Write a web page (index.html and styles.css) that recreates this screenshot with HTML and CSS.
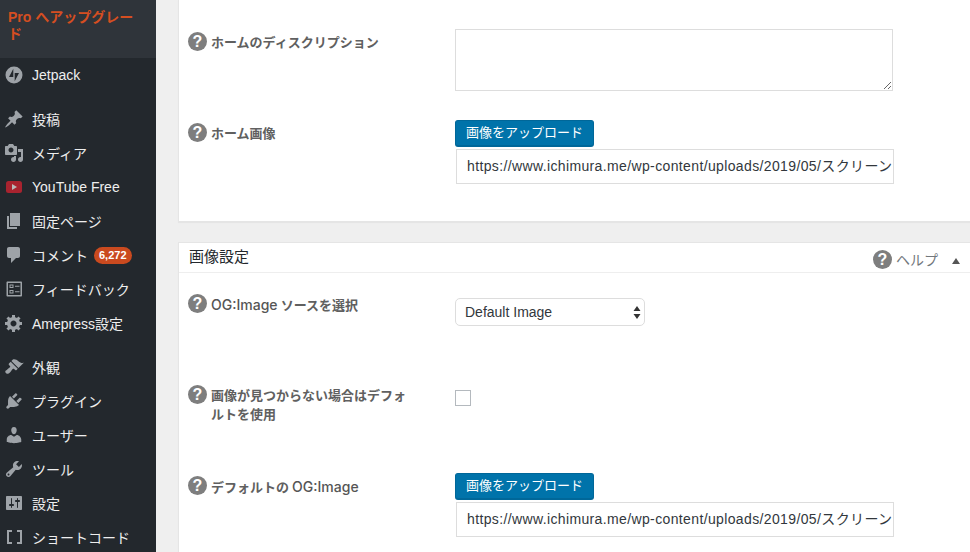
FILE: index.html
```html
<!DOCTYPE html>
<html lang="ja">
<head>
<meta charset="utf-8">
<title>設定</title>
<link rel="stylesheet" href="styles.css">
</head>
<body>
<div class="page">
  <nav class="side">
    <a class="upgrade">Pro へアップグレード</a>
    <a class="item sep"><svg class="ic" viewBox="0 0 20 20"><path fill-rule="evenodd" d="M10 1.500a8.500 8.500 0 1 0 0 17 8.500 8.500 0 0 0 0-17zM9.300 3.800v8.100H5zM10.700 16.200V8.100H15z"/></svg>Jetpack</a>
    <a class="item"><svg class="ic" viewBox="0 0 20 20"><path d="M10.44 3.02l1.82-1.82 6.36 6.35-1.83 1.82c-1.05-.68-2.48-.57-3.41.36l-.75.75c-.92.93-1.04 2.35-.35 3.41l-1.83 1.82-2.41-2.41-2.8 2.79c-.42.42-3.38 2.71-3.8 2.29s1.86-3.39 2.28-3.81l2.79-2.79L4.1 9.36l1.83-1.82c1.05.69 2.48.57 3.4-.36l.75-.75c.93-.92 1.05-2.35.36-3.41z"/></svg>投稿</a>
    <a class="item"><svg class="ic" viewBox="0 0 20 20"><path d="M13 11V4c0-.55-.45-1-1-1h-1.67L9 1H5L3.67 3H2c-.55 0-1 .45-1 1v7c0 .55.45 1 1 1h10c.55 0 1-.45 1-1zM7 4.5c1.38 0 2.5 1.12 2.5 2.5S8.38 9.5 7 9.5 4.5 8.38 4.5 7 5.62 4.5 7 4.5zM14 6h5v10.5c0 1.38-1.12 2.5-2.5 2.5S14 17.88 14 16.5s1.12-2.5 2.5-2.5c.17 0 .34.02.5.05V9h-3V6zm-4 8.05V13h2v3.5c0 1.38-1.12 2.5-2.5 2.5S7 17.88 7 16.5 8.12 14 9.5 14c.17 0 .34.02.5.05z"/></svg>メディア</a>
    <a class="item"><svg class="ic" viewBox="0 0 20 20"><rect class="yt" x="2" y="4" width="16" height="12" rx="2.500"/><path class="yt-play" d="M8 7l5 3-5 3z"/></svg>YouTube Free</a>
    <a class="item"><svg class="ic" viewBox="0 0 20 20"><path d="M6 15V2h10v13H6zm-1 1h8v2H3V5h2v11z"/></svg>固定ページ</a>
    <a class="item"><svg class="ic" viewBox="0 0 20 20"><path d="M5 2h9c1.1 0 2 .9 2 2v7c0 1.1-.9 2-2 2h-2l-5 5v-5H5c-1.1 0-2-.9-2-2V4c0-1.1.9-2 2-2z"/></svg>コメント<span class="badge">6,272</span></a>
    <a class="item"><svg class="ic" viewBox="0 0 20 20"><path fill-rule="evenodd" d="M3.500 2.500h13.500c.55 0 1 .45 1 1v13c0 .55-.45 1-1 1H3.500c-.55 0-1-.45-1-1v-13c0-.55.45-1 1-1zm.5 1.500v12h12.500V4H4zm1.500 1.500h4v3.500h-4zm1 1v1.500h2V6.500zm4.500.2h4.500v1.100H11zM5.500 11h4v3.500h-4zm1 1v1.500h2V12zm4.500.2h4.500v1.100H11z"/></svg>フィードバック</a>
    <a class="item sep"><svg class="ic" viewBox="0 0 20 20"><path d="M18 12h-2.18c-.17.7-.44 1.35-.81 1.93l1.54 1.54-2.1 2.1-1.54-1.54c-.58.36-1.23.63-1.91.79V19H8v-2.18c-.68-.16-1.33-.43-1.91-.79l-1.54 1.54-2.12-2.12 1.54-1.54c-.36-.58-.63-1.23-.79-1.91H1V9.03h2.170c.16-.7.44-1.35.8-1.94L2.430 5.550l2.100-2.100 1.540 1.540c.58-.37 1.240-.64 1.930-.81V2h3v2.180c.68.16 1.330.43 1.910.79l1.540-1.540 2.120 2.120-1.540 1.540c.36.59.64 1.240.8 1.940H18V12zm-8.500 1.500c1.660 0 3-1.340 3-3s-1.340-3-3-3-3 1.340-3 3 1.340 3 3 3z"/></svg>Amepress設定</a>
    <a class="item"><svg class="ic" viewBox="0 0 20 20"><path d="M14.48 11.06L7.41 3.99l1.5-1.5c.5-.56 2.3-.47 3.51.32 1.21.8 1.43 1.28 2.91 2.1 1.18.64 2.45 1.26 4.45.85zm-.71.71L6.700 4.700 4.930 6.470c-.39.39-.39 1.020 0 1.410l1.060 1.060c.39.39.39 1.030 0 1.420-.6.6-1.430 1.110-2.210 1.690-.35.26-.7.53-1.010.84C1.430 13.230.91 14.650 1.500 15.530c.2.3.6.7.97.97.88.59 2.300.07 3.690-1.330.31-.31.58-.66.84-1.010.58-.78 1.090-1.610 1.690-2.210.39-.39 1.030-.39 1.420 0l1.060 1.060c.39.39 1.020.39 1.410 0z"/></svg>外観</a>
    <a class="item"><svg class="ic" viewBox="0 0 20 20"><path d="M13.110 4.360L9.870 7.600 8 5.730l3.240-3.240c.35-.34 1.050-.2 1.560.32.52.51.66 1.210.31 1.550zm-8 1.770l.91-1.120 9.010 9.010-1.190.84c-.71.71-2.630 1.160-3.820 1.160H6.140L4.900 17.260c-.59.59-1.540.59-2.120 0-.59-.58-.59-1.530 0-2.120l1.240-1.240v-3.880c0-1.130.4-3.190 1.090-3.890zm7.260 3.970l3.240-3.240c.34-.35 1.040-.21 1.550.31.52.51.66 1.210.31 1.550l-3.240 3.250z"/></svg>プラグイン</a>
    <a class="item"><svg class="ic" viewBox="0 0 20 20"><path d="M10 9.250c-2.270 0-2.730-3.440-2.730-3.440C7 4.020 7.820 2 9.970 2c2.160 0 2.980 2.020 2.710 3.810 0 0-.41 3.440-2.680 3.440zm0 2.570L12.720 10c2.390 0 4.520 2.330 4.520 4.530v2.490s-3.650 1.130-7.240 1.130c-3.650 0-7.240-1.130-7.240-1.130v-2.490c0-2.250 1.940-4.480 4.470-4.480z"/></svg>ユーザー</a>
    <a class="item"><svg class="ic" viewBox="0 0 20 20"><path d="M16.680 9.770c-1.340 1.340-3.300 1.670-4.950.99l-5.410 6.520c-.99.99-2.590.99-3.580 0s-.99-2.590 0-3.570l6.520-5.420c-.68-1.650-.35-3.610.99-4.950 1.280-1.280 3.120-1.620 4.720-1.060l-2.890 2.890 2.820 2.820 2.860-2.870c.53 1.580.18 3.390-1.080 4.650zM3.810 16.210c.4.39 1.040.39 1.430 0 .4-.4.4-1.040 0-1.430-.39-.4-1.030-.4-1.430 0-.39.39-.39 1.030 0 1.430z"/></svg>ツール</a>
    <a class="item"><svg class="ic" viewBox="0 0 20 20"><path d="M18 16V4c0-.55-.45-1-1-1H3c-.55 0-1 .45-1 1v12c0 .55.45 1 1 1h14c.55 0 1-.45 1-1zM8 11h1c.55 0 1 .45 1 1s-.45 1-1 1H8v1.500c0 .28-.22.5-.5.5s-.5-.22-.5-.5V13H6c-.55 0-1-.45-1-1s.45-1 1-1h1V5.500c0-.28.22-.5.5-.5s.5.22.5.5V11zm5-2h-1c-.55 0-1-.45-1-1s.45-1 1-1h1V5.500c0-.28.22-.5.5-.5s.5.22.5.5V7h1c.55 0 1 .45 1 1s-.45 1-1 1h-1v5.500c0 .28-.22.5-.5.5s-.5-.22-.5-.5V9z"/></svg>設定</a>
    <a class="item"><svg class="ic" viewBox="0 0 20 20"><path d="M3 3h5v2H5v10h3v2H3zM18 3h-5v2h3v10h-3v2h5z"/></svg>ショートコード</a>
  </nav>

  <main class="main">
    <section class="card card-top">
      <div class="row">
        <div class="label"><span class="q">?</span><span class="label-text">ホームのディスクリプション</span></div>
        <div><textarea class="area"></textarea></div>
      </div>
      <div class="row">
        <div class="label"><span class="q">?</span><span class="label-text">ホーム画像</span></div>
        <div class="field">
          <button class="btn" type="button">画像をアップロード</button>
          <input class="url" type="text" value="https://www.ichimura.me/wp-content/uploads/2019/05/スクリーンショット">
        </div>
      </div>
    </section>

    <section class="card card-second">
      <header class="head">
        <h2 class="title">画像設定</h2>
        <div class="help"><span class="q">?</span><span class="help-text">ヘルプ</span><span class="arrow"></span></div>
      </header>
      <div class="body">
        <div class="row">
          <div class="label"><span class="q">?</span><span class="label-text"><span class="latin">OG:Image</span> ソースを選択</span></div>
          <div class="select-wrap">
            <select class="select"><option>Default Image</option></select>
            <svg class="select-arrows" viewBox="0 0 8 13"><path d="M4 0l3.500 5H.5zM4 13L.5 8h7z"/></svg>
          </div>
        </div>
        <div class="row">
          <div class="label"><span class="q">?</span><span class="label-text">画像が見つからない場合はデフォルトを使用</span></div>
          <div><input class="check" type="checkbox"></div>
        </div>
        <div class="row">
          <div class="label"><span class="q">?</span><span class="label-text">デフォルトの <span class="latin">OG:Image</span></span></div>
          <div class="field">
            <button class="btn" type="button">画像をアップロード</button>
            <input class="url" type="text" value="https://www.ichimura.me/wp-content/uploads/2019/05/スクリーンショット">
          </div>
        </div>
      </div>
    </section>
  </main>
</div>
</body>
</html>
```
FILE: styles.css
```css
* { box-sizing: border-box; }
html, body { margin: 0; height: 100%; overflow: hidden; }
body {
  background: #efefef;
  font-family: "Liberation Sans", "Noto Sans CJK JP", sans-serif;
  color: #444;
}
.page { display: flex; height: 552px; overflow: hidden; }

/* Sidebar */
.side {
  flex: 0 0 156px;
  background: #23282d;
  color: #eee;
  font-size: 14px;
}
.upgrade {
  display: block;
  height: 58px;
  padding: 9px 20px 0 8px;
  background: #2f343a;
  color: #d54e21;
  font-weight: 700;
  line-height: 17px;
}
.item {
  display: flex;
  align-items: center;
  height: 34px;
  padding-left: 4px;
  color: #eee;
}
.item.sep { margin-bottom: 10px; }
.ic { width: 20px; height: 20px; margin-right: 8px; fill: #9ea3a8; flex: none; }
.yt { fill: #a8232f; }
.yt-play { fill: #b9b9b9; }
.badge {
  margin-left: 6px;
  height: 17px;
  padding: 0 5px;
  border-radius: 9px;
  background: #ca4a1f;
  color: #fff;
  font-size: 11px;
  font-weight: 700;
  line-height: 17px;
}

/* Content */
.main { flex: 1; min-width: 0; padding-left: 22px; }
.card {
  background: #fff;
  border: 1px solid #e5e5e5;
  border-right: 0;
  box-shadow: 0 1px 1px rgba(0, 0, 0, .04);
}
.card-top { border-top: 0; padding: 29px 0 10px; height: 222px; }
.card-second { margin-top: 20px; }
.head {
  display: flex;
  align-items: center;
  justify-content: space-between;
  height: 30px;
  padding-left: 10px;
  border-bottom: 1px solid #eee;
}
.title {
  margin: 0;
  font-size: 15px;
  font-weight: 400;
  line-height: 28px;
  color: #23282d;
  align-self: flex-start;
}
.help { display: flex; align-items: center; padding-top: 3px; }
.help-text { margin-left: 4px; font-size: 14px; color: #72777c; }
.arrow {
  width: 0;
  height: 0;
  margin: 4px 10px 0 14px;
  border-left: 4px solid transparent;
  border-right: 4px solid transparent;
  border-bottom: 6px solid #555;
}
.body { padding-top: 18px; }
.row {
  display: grid;
  grid-template-columns: 222px 1fr;
  column-gap: 45px;
  height: 91px;
  padding-left: 9px;
}
.label {
  display: flex;
  gap: 4px;
  padding-top: 3px;
  font-family: "Inter", "Noto Sans CJK JP", sans-serif;
  font-size: 13px;
  font-weight: 700;
  line-height: 19px;
  color: #606060;
}
.label-text { padding-top: 1px; }
.latin { font-size: 14px; font-weight: 500; color: #555; }
.q {
  flex: none;
  width: 19px;
  height: 19px;
  border-radius: 50%;
  background: #7e7e7e;
  color: #fff;
  font: 700 16px/19px "Liberation Sans", sans-serif;
  text-align: center;
}
.area {
  display: block;
  width: 438px;
  height: 62px;
  border: 1px solid #ddd;
  background: #fff;
  margin: 0;
}
.field { display: flex; flex-direction: column; align-items: flex-start; }
.btn {
  width: 139px;
  height: 27px;
  padding: 0;
  border: 1px solid #006799;
  border-bottom-width: 2px;
  border-radius: 3px;
  background: #0073aa;
  color: #fff;
  font: 13px/24px "Liberation Sans", "Noto Sans CJK JP", sans-serif;
}
.url {
  width: 438px;
  height: 35px;
  margin: 2px 0 0 1px;
  padding: 0 1px 4px 10px;
  border: 1px solid #ddd;
  background: #fff;
  color: #32373c;
  font: 14px "Liberation Sans", "Noto Sans CJK JP", sans-serif;
  letter-spacing: .37px;
  outline: 0;
}
.select-wrap { position: relative; width: 190px; height: 28px; margin-top: 7px; }
.select {
  display: block;
  width: 100%;
  height: 28px;
  padding: 0 20px 0 9px;
  appearance: none;
  border: 1px solid #ddd;
  border-radius: 5px;
  background: #fff;
  color: #32373c;
  font: 14px "Liberation Sans", sans-serif;
}
.select-arrows {
  position: absolute;
  right: 4px;
  top: 8px;
  width: 8px;
  height: 13px;
  fill: #333;
  pointer-events: none;
}
.check {
  display: block;
  width: 16px;
  height: 16px;
  margin: 8px 0 0;
  appearance: none;
  border: 1px solid #b4b9be;
  background: #fff;
}
```
